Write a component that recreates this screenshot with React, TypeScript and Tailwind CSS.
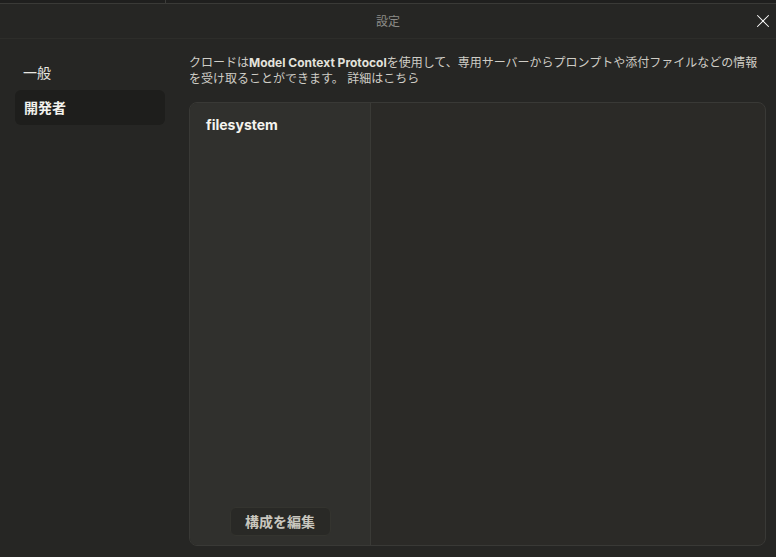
import { X } from 'lucide-react'

const NAV = [
  { label: '一般', active: false },
  { label: '開発者', active: true },
]

export default function App() {
  return (
    <div
      className="w-full h-[557px] bg-[#262624] flex flex-col overflow-hidden text-[#e5e4df]"
      style={{ fontFamily: 'Inter, "Noto Sans CJK JP", sans-serif' }}
    >
      {/* window strip */}
      <div className="h-[4px] flex bg-[#1f1f1e] border-b border-[#3a3a37]">
        <div className="w-[166px] border-r border-[#3d3d3a]" />
      </div>

      {/* header */}
      <div className="h-[35px] relative flex items-center justify-center border-b border-[#2d2d2a]">
        <span className="text-[12px] text-[#8c8c88] pt-[1px]">設定</span>
        <button className="absolute right-[2px] top-[6px] text-white">
          <X size={22} strokeWidth={1.1} />
        </button>
      </div>

      <div className="flex-1 flex min-h-0">
        {/* side nav */}
        <nav className="w-[189px] shrink-0 pl-[15px] pr-[24px] pt-[16px] flex flex-col">
          {NAV.map(({ label, active }) => (
            <div
              key={label}
              className={
                active
                  ? 'h-[35px] flex items-center px-[9px] rounded-md bg-[#1e1e1c] text-[14px] font-bold text-[#f2f1ec]'
                  : 'h-[35px] flex items-center px-[8px] rounded-md text-[14px] text-[#e8e7e2]'
              }
            >
              {label}
            </div>
          ))}
        </nav>

        {/* content */}
        <div className="flex-1 flex flex-col pt-[16px] pr-[10px] pb-[11px] min-w-0">
          <p className="text-[12px] leading-[16px] text-[#cfcdc6]">
            クロードは<span className="font-bold text-[#e3e2dc]">Model Context Protocol</span>を使用して、専用サーバーからプロンプトや添付ファイルなどの情報を受け取ることができます。 詳細はこちら
          </p>

          <div className="mt-[15px] flex-1 flex rounded-lg border border-[#393936] overflow-hidden bg-[#2b2a27]">
            <div className="w-[181px] shrink-0 bg-[#30302d] border-r border-[#3a3a36] flex flex-col items-center justify-between pt-[11px] pb-[9px]">
              <div className="self-start pl-[16px] text-[14px] font-bold text-[#f5f4ef]">filesystem</div>
              <button className="w-[101px] h-[29px] rounded-md bg-[#292926] border border-[#34342f] text-[14px] font-semibold text-[#c9c7bf]">
                構成を編集
              </button>
            </div>
            <div className="flex-1" />
          </div>
        </div>
      </div>
    </div>
  )
}
